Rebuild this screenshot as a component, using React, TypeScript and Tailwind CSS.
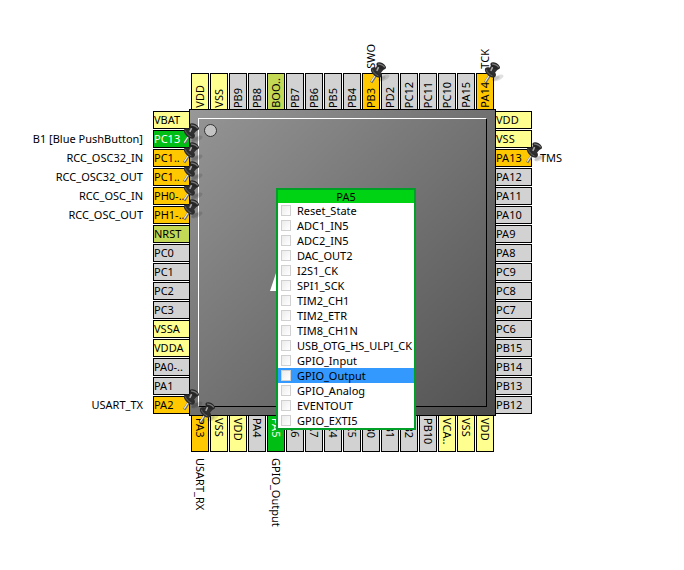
import { useState } from "react";
import clsx from "clsx";

type Side = "left" | "right" | "top" | "bottom";
type Kind = "io" | "power" | "reset" | "assigned" | "active";

type Pin = {
  name: string;
  kind?: Kind;
  net?: string;
  locked?: boolean;
};

const leftPins: Pin[] = [
  { name: "VBAT", kind: "power" },
  { name: "PC13", kind: "active", net: "B1 [Blue PushButton]", locked: true },
  { name: "PC1..", kind: "assigned", net: "RCC_OSC32_IN", locked: true },
  { name: "PC1..", kind: "assigned", net: "RCC_OSC32_OUT", locked: true },
  { name: "PH0-..", kind: "assigned", net: "RCC_OSC_IN", locked: true },
  { name: "PH1-..", kind: "assigned", net: "RCC_OSC_OUT", locked: true },
  { name: "NRST", kind: "reset" },
  { name: "PC0" },
  { name: "PC1" },
  { name: "PC2" },
  { name: "PC3" },
  { name: "VSSA", kind: "power" },
  { name: "VDDA", kind: "power" },
  { name: "PA0-.." },
  { name: "PA1" },
  { name: "PA2", kind: "assigned", net: "USART_TX", locked: true },
];

const topPins: Pin[] = [
  { name: "VDD", kind: "power" },
  { name: "VSS", kind: "power" },
  { name: "PB9" },
  { name: "PB8" },
  { name: "BOO..", kind: "reset" },
  { name: "PB7" },
  { name: "PB6" },
  { name: "PB5" },
  { name: "PB4" },
  { name: "PB3", kind: "assigned", net: "SWO", locked: true },
  { name: "PD2" },
  { name: "PC12" },
  { name: "PC11" },
  { name: "PC10" },
  { name: "PA15" },
  { name: "PA14", kind: "assigned", net: "TCK", locked: true },
];

const rightPins: Pin[] = [
  { name: "VDD", kind: "power" },
  { name: "VSS", kind: "power" },
  { name: "PA13", kind: "assigned", net: "TMS", locked: true },
  { name: "PA12" },
  { name: "PA11" },
  { name: "PA10" },
  { name: "PA9" },
  { name: "PA8" },
  { name: "PC9" },
  { name: "PC8" },
  { name: "PC7" },
  { name: "PC6" },
  { name: "PB15" },
  { name: "PB14" },
  { name: "PB13" },
  { name: "PB12" },
];

const bottomPins: Pin[] = [
  { name: "PA3", kind: "assigned", net: "USART_RX", locked: true },
  { name: "VSS", kind: "power" },
  { name: "VDD", kind: "power" },
  { name: "PA4" },
  { name: "PA5", kind: "active", net: "GPIO_Output" },
  { name: "PA6" },
  { name: "PA7" },
  { name: "PC4" },
  { name: "PC5" },
  { name: "PB0" },
  { name: "PB1" },
  { name: "PB2" },
  { name: "PB10" },
  { name: "VCA..", kind: "power" },
  { name: "VSS", kind: "power" },
  { name: "VDD", kind: "power" },
];

const signals = [
  "Reset_State",
  "ADC1_IN5",
  "ADC2_IN5",
  "DAC_OUT2",
  "I2S1_CK",
  "SPI1_SCK",
  "TIM2_CH1",
  "TIM2_ETR",
  "TIM8_CH1N",
  "USB_OTG_HS_ULPI_CK",
  "GPIO_Input",
  "GPIO_Output",
  "GPIO_Analog",
  "EVENTOUT",
  "GPIO_EXTI5",
];

const kindStyles: Record<Kind, string> = {
  io: "bg-[#d2d2d2] text-black",
  power: "bg-[#ffff90] text-black",
  reset: "bg-[#c3d855] text-black",
  assigned: "bg-[#ffc800] text-black",
  active: "bg-[#00be14] text-white",
};

// each pad is open on the side that touches the chip
const padStyles: Record<Side, string> = {
  left: "h-[18px] w-9 border-r-0",
  right: "h-[18px] w-9 border-l-0",
  top: "h-9 w-[18px] border-b-0 pb-px",
  bottom: "h-9 w-[18px] border-t-0 pt-0.5",
};

const slotStyles: Record<Side, string> = {
  left: "flex-row-reverse gap-2.5",
  right: "flex-row gap-2",
  top: "flex-col-reverse gap-1",
  bottom: "flex-col gap-1.5",
};

const textStyles: Record<Side, string> = {
  left: "",
  right: "",
  top: "[writing-mode:vertical-rl] rotate-180",
  bottom: "[writing-mode:vertical-rl]",
};

const tackStyles: Record<Side, string> = {
  left: "left-[30px] -top-[7px]",
  right: "left-[30px] -top-[7px]",
  top: "left-2 -top-[11px]",
  bottom: "left-2 -top-[14px]",
};

function PushPin({ className }: { className: string }) {
  return (
    <svg
      viewBox="0 0 24 23"
      className={clsx("pointer-events-none absolute z-20 h-[23px] w-6", className)}
      aria-hidden="true"
    >
      <ellipse cx="14" cy="16" rx="6" ry="2.6" fill="#000" opacity="0.12" transform="rotate(-25 14 16)" />
      <ellipse cx="12" cy="16.4" rx="4" ry="1.6" fill="#000" opacity="0.12" transform="rotate(-25 12 16.4)" />
      <path d="M6.5 12.5 1.2 20.5" stroke="#6a6a6a" strokeWidth="2.6" />
      <path d="M5.6 13 1.2 19.6" stroke="#e8e8e8" strokeWidth="1.2" />
      {/* flange, neck, cap */}
      <ellipse cx="6.4" cy="10.4" rx="6.6" ry="3.8" fill="#2c2c2c" transform="rotate(42 6.4 10.4)" />
      <path d="M7.5 2.5 4.4 8.4 9.4 12.4 14.2 7z" fill="#303030" />
      <ellipse cx="11.2" cy="3.9" rx="5.2" ry="3" fill="#262626" transform="rotate(30 11.2 3.9)" />
      <path d="M8 2.200c2-.5 5.600 1.200 6.700 3.200" stroke="#777" strokeWidth="1.200" fill="none" />
      <path d="M8.600 5.200 6.800 8.800" stroke="#aaa" strokeWidth="1.500" />
      <path d="M2.400 7.600c.6 2.600 3.200 5.200 6 6.200" stroke="#666" strokeWidth="1" fill="none" />
    </svg>
  );
}

function PinSlot({ pin, side }: { pin: Pin; side: Side }) {
  return (
    <div className={clsx("relative flex items-center", slotStyles[side])}>
      <div className="relative flex shrink-0">
        <button
          type="button"
          className={clsx(
            "flex items-center overflow-hidden border border-black whitespace-nowrap",
            side === "top" && "flex-col justify-end",
            side === "bottom" && "flex-col justify-start",
            padStyles[side],
            kindStyles[pin.kind ?? "io"],
          )}
        >
          <span className={textStyles[side]}>{pin.name}</span>
        </button>
        {pin.locked && <PushPin className={tackStyles[side]} />}
      </div>
      {pin.net && <span className={clsx("whitespace-nowrap", textStyles[side])}>{pin.net}</span>}
    </div>
  );
}

function SignalMenu() {
  const [active, setActive] = useState("GPIO_Output");

  return (
    <fieldset className="absolute top-[78px] left-[86px] z-30 w-[140px] border-2 border-[#00a028] bg-white">
      <div className="h-[13px] bg-[#00d214] text-center leading-[14px]">PA5</div>
      {signals.map((signal) => (
        <label
          key={signal}
          className={clsx(
            "flex h-[15px] items-center gap-1.5 pl-[3px] leading-[15px] whitespace-nowrap",
            signal === active && "bg-[#3399ff]",
          )}
          onMouseEnter={() => setActive(signal)}
        >
          <input
            type="checkbox"
            className="h-[11px] w-2.5 shrink-0 appearance-none border border-[#d0d0d0] bg-linear-to-br from-[#ececec] to-white"
          />
          {signal}
        </label>
      ))}
    </fieldset>
  );
}

function ChipBody() {
  return (
    <div className="relative col-start-2 row-start-2 border border-black bg-linear-to-br from-[#989898] to-[#4a4a4a] p-2">
      <div className="h-full border border-t-white border-r-black border-b-black border-l-white bg-linear-to-br from-[#939393] to-[#545454] p-[5px]">
        <div className="size-[13px] rounded-full border border-[#333] bg-[#c4c4c4]" />
      </div>
      {/* corner of the vendor logo that sticks out from under the menu */}
      <svg viewBox="0 0 12 18" className="absolute top-[163px] left-20 h-[18px] w-3" aria-hidden="true">
        <path d="M0 18 6 0h6v18z" fill="#fff" />
      </svg>
      <SignalMenu />
    </div>
  );
}

export default function App() {
  return (
    <main className="grid min-h-screen grid-cols-[1fr_auto_1fr] grid-rows-[auto_auto_1fr] overflow-hidden bg-white pl-px font-['Noto_Sans',sans-serif] text-[11px] leading-4 text-black">
      <div className="col-start-2 row-start-1 flex h-[109px] items-end gap-px px-0.5">
        {topPins.map((pin, i) => (
          <PinSlot key={i} pin={pin} side="top" />
        ))}
      </div>

      <div className="col-start-1 row-start-2 flex flex-col gap-px py-0.5">
        {leftPins.map((pin, i) => (
          <PinSlot key={i} pin={pin} side="left" />
        ))}
      </div>
      <ChipBody />
      <div className="col-start-3 row-start-2 flex flex-col gap-px py-0.5">
        {rightPins.map((pin, i) => (
          <PinSlot key={i} pin={pin} side="right" />
        ))}
      </div>

      <div className="col-start-2 row-start-3 flex items-start gap-px px-0.5">
        {bottomPins.map((pin, i) => (
          <PinSlot key={i} pin={pin} side="bottom" />
        ))}
      </div>
    </main>
  );
}
